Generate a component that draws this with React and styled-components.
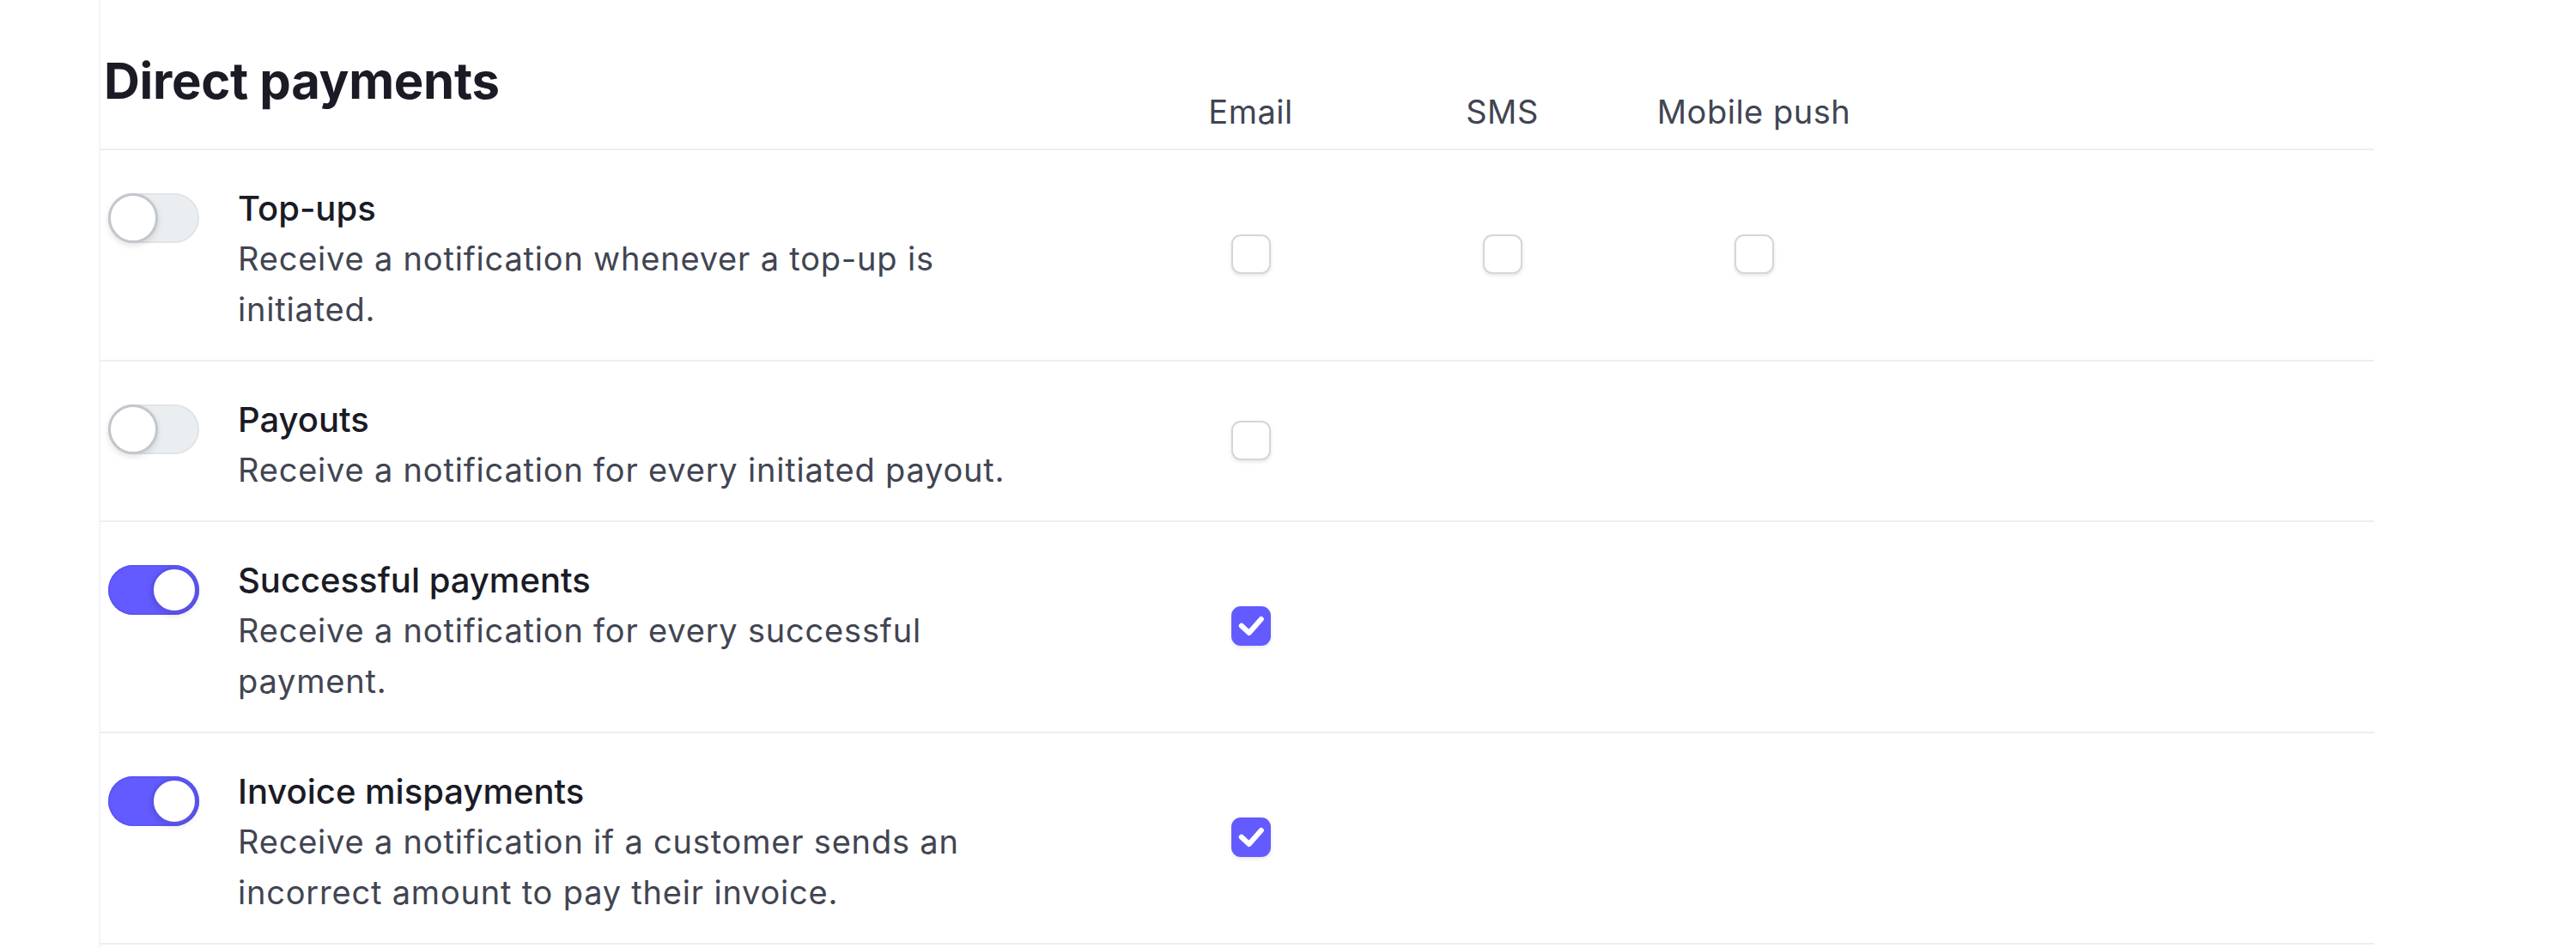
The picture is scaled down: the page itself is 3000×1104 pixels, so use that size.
import styled, { createGlobalStyle } from "styled-components";

const GlobalStyle = createGlobalStyle`
  html, body {
    margin: 0;
    padding: 0;
    background: #ffffff;
  }
  body {
    font-family: "Inter", "Noto Sans", "Liberation Sans", sans-serif;
    -webkit-font-smoothing: antialiased;
  }
`;

const Page = styled.div`
  width: 3000px;
  height: 1104px;
  overflow: hidden;
  background: #ffffff;
`;

const Section = styled.section`
  margin-left: 117px;
  width: 2648px;
  min-height: 1104px;
  box-shadow: -2px 0 0 #f3f4f6;
`;

const Grid = styled.div`
  display: grid;
  grid-template-columns: 151px 1033px repeat(3, 293px);
  padding-left: 9px;
  border-bottom: 2px solid #ebeef1;
`;

const Header = styled(Grid)`
  padding-top: 59px;
  padding-bottom: 14px;
`;

const Heading = styled.h2`
  grid-column: 1 / span 2;
  align-self: start;
  margin: 0 0 30px -5px;
  font-size: 58px;
  line-height: 70px;
  font-weight: 700;
  color: #1a1b25;
  letter-spacing: -0.3px;
`;

const ColumnLabel = styled.div`
  align-self: end;
  text-align: center;
  font-size: 38px;
  line-height: 57px;
  letter-spacing: 0.5px;
  color: #414552;
`;

const Row = styled(Grid)`
  padding-top: 38px;
  padding-bottom: 29px;
  align-items: center;
`;

const ToggleCell = styled.div`
  align-self: start;
  padding-top: 12px;
`;

const Toggle = styled.span`
  position: relative;
  display: block;
  width: 106px;
  height: 58px;
  border-radius: 29px;
  box-sizing: border-box;
  background: ${(p) => (p.$on ? "#635bff" : "#ebeef1")};
  box-shadow: inset 0 0 0 2px ${(p) => (p.$on ? "#5d55f5" : "#e1e4e8")};

  &::after {
    content: "";
    position: absolute;
    top: ${(p) => (p.$on ? "2px" : "0")};
    left: ${(p) => (p.$on ? "50px" : "0")};
    width: ${(p) => (p.$on ? "54px" : "58px")};
    height: ${(p) => (p.$on ? "54px" : "58px")};
    box-sizing: border-box;
    border-radius: 50%;
    background: #ffffff;
    border: 3px solid ${(p) => (p.$on ? "#5a52e8" : "#c3c6cc")};
    box-shadow: 0 3px 7px rgba(0, 0, 0, 0.12);
  }
`;

const TextCell = styled.div`
  max-width: 960px;
  align-self: start;
`;

const Title = styled.div`
  font-size: 40px;
  line-height: 59px;
  font-weight: 500;
  color: #1a1b25;
`;

const Description = styled.div`
  font-size: 38px;
  line-height: 59px;
  letter-spacing: 0.8px;
  color: #414552;
`;

const CheckCell = styled.div`
  display: flex;
  justify-content: center;
  padding-bottom: 11px;
`;

const Box = styled.span`
  display: flex;
  align-items: center;
  justify-content: center;
  width: 46px;
  height: 46px;
  box-sizing: border-box;
  border-radius: 11px;
  background: ${(p) => (p.$checked ? "#635bff" : "#ffffff")};
  border: 2px solid ${(p) => (p.$checked ? "#635bff" : "#d3d7dc")};
  box-shadow: 0 2px 4px rgba(0, 0, 0, 0.1);

  svg {
    flex-shrink: 0;
    width: 46px;
    height: 46px;
  }
`;

const Checkbox = ({ checked }) => (
  <Box $checked={checked}>
    {checked && (
      <svg viewBox="0 0 16 16" fill="none">
        <path
          d="M4.1 7.9 L7.2 10.8 L12.1 5.2"
          stroke="#ffffff"
          strokeWidth="2.1"
          strokeLinecap="round"
          strokeLinejoin="round"
        />
      </svg>
    )}
  </Box>
);

const items = [
  {
    title: "Top-ups",
    text: "Receive a notification whenever a top-up is initiated.",
    on: false,
    channels: [false, false, false],
  },
  {
    title: "Payouts",
    text: "Receive a notification for every initiated payout.",
    on: false,
    channels: [false],
  },
  {
    title: "Successful payments",
    text: "Receive a notification for every successful payment.",
    on: true,
    channels: [true],
  },
  {
    title: "Invoice mispayments",
    text: "Receive a notification if a customer sends an incorrect amount to pay their invoice.",
    on: true,
    channels: [true],
  },
];

export default function App() {
  return (
    <Page>
      <GlobalStyle />
      <Section>
        <Header>
          <Heading>Direct payments</Heading>
          <ColumnLabel>Email</ColumnLabel>
          <ColumnLabel>SMS</ColumnLabel>
          <ColumnLabel>Mobile push</ColumnLabel>
        </Header>
        {items.map((item) => (
          <Row key={item.title}>
            <ToggleCell>
              <Toggle $on={item.on} />
            </ToggleCell>
            <TextCell>
              <Title>{item.title}</Title>
              <Description>{item.text}</Description>
            </TextCell>
            {item.channels.map((c, i) => (
              <CheckCell key={i}>
                <Checkbox checked={c} />
              </CheckCell>
            ))}
          </Row>
        ))}
      </Section>
    </Page>
  );
}
